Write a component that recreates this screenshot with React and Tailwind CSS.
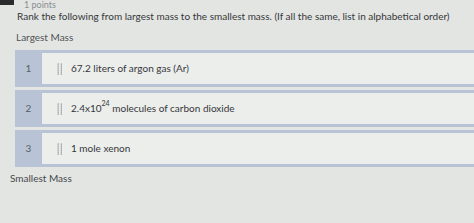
const items = [
  { n: 1, text: <>67.2 liters of argon gas (Ar)</> },
  { n: 2, text: <>2.4x10<sup className="text-[7px] align-[3px]">24</sup> molecules of carbon dioxide</> },
  { n: 3, text: <>1 mole xenon</> },
];

function Handle() {
  return (
    <svg width="6" height="12" viewBox="0 0 6 12" className="shrink-0">
      {[0, 1, 2, 3, 4, 5].map((r) => (
        <g key={r} fill="#8a8f96">
          <rect x="0.5" y={r * 2 + 0.5} width="1.3" height="1.2" />
          <rect x="3.7" y={r * 2 + 0.5} width="1.3" height="1.2" />
        </g>
      ))}
    </svg>
  );
}

export default function App() {
  return (
    <div
      className="h-[223px] w-[474px] overflow-hidden bg-[#e3e5e2] text-[#35373a]"
      style={{ fontFamily: 'Lato, "Open Sans", sans-serif' }}
    >
      <div className="flex h-[5px] items-end gap-[10px]">
        <div className="h-[5px] w-[14px] bg-[#2a2b2d]" />
        <span className="-mb-[4px] text-[9px] leading-none text-[#8a8d90]">1 points</span>
      </div>
      <p className="mt-[4px] pl-[17px] text-[10px] leading-[14px]">
        Rank the following from largest mass to the smallest mass. (If all the same, list in alphabetical order)
      </p>
      <p className="mt-[7px] pl-[16px] text-[10px] leading-[14px] text-[#505357]">Largest Mass</p>
      <div className="mt-[6px] flex flex-col gap-[3px] pl-[15px]">
        {items.map((it) => (
          <div key={it.n} className="flex h-[37px] bg-[#b8c3d5] py-[3px]">
            <div className="flex w-[27px] items-center justify-center text-[10px] text-[#5a5e66]">{it.n}</div>
            <div className="flex flex-1 items-center gap-[8px] bg-[#eceeec] pl-[15px] text-[10px] text-[#35373a]">
              <Handle />
              <span>{it.text}</span>
            </div>
          </div>
        ))}
      </div>
      <p className="mt-[4px] pl-[10px] text-[10px] leading-[14px] text-[#45484b]">Smallest Mass</p>
    </div>
  );
}
